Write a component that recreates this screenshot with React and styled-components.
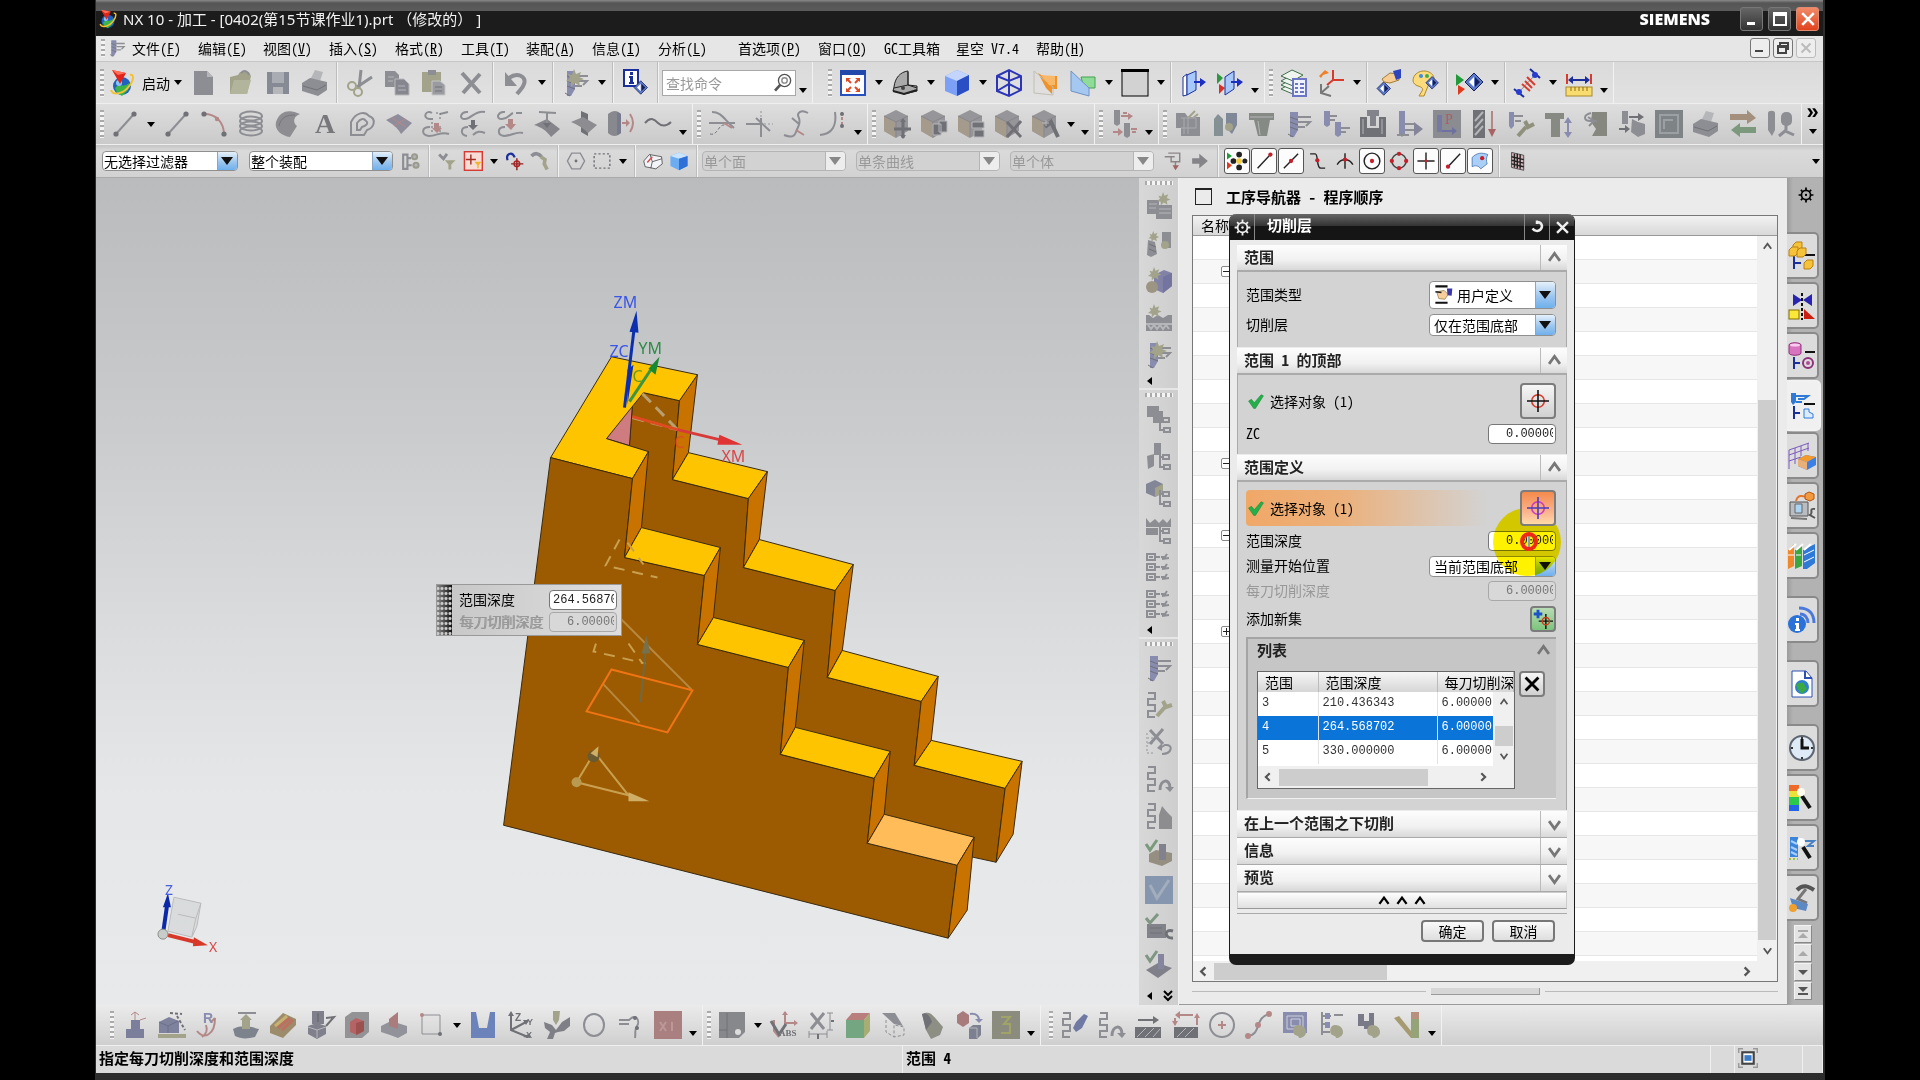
import React from 'react';
import styled, { createGlobalStyle, css } from 'styled-components';

const GlobalStyle = createGlobalStyle`
  * {
    box-sizing: border-box;
  }

  body {
    margin: 0;
    background: #000;
    color: #000;
    font-family: 'Noto Sans Mono CJK SC', 'Noto Sans CJK SC', sans-serif;
    font-size: 14px;
    line-height: 20px;
  }

  button, input, select {
    margin: 0;
    padding: 0;
    font: inherit;
    color: inherit;
  }
`;

/* ---------- icons ---------- */

const G = '#8d8e94';
const D = '#707177';
const L = '#b5b6b9';
const OL = '#a2a38a';
const RO = '#b58888';
const BL = '#888cae';
const NAVY = '#1a2f9c';

const ln = (d, c = D, w = 2, dash) => (
  <path d={d} fill="none" stroke={c} strokeWidth={w} strokeDasharray={dash} />
);
const fl = (d, c = G, s) => <path d={d} fill={c} stroke={s} />;
const dot = (x, y, r = 2, c = D, s) => <circle cx={x} cy={y} r={r} fill={c} stroke={s} />;

const star = (c = OL) => fl('M12 0l2 5 5-2-2 5 5 2-5 2 1 5-5-3-4 4v-5l-5-1 4-3-2-4 4 1z', c);
const greyCube = (
  <>
    {fl('M1 6l12-6 12 6v15l-12 7-12-7z', '#96959a')}
    {fl('M1 6l12 6v16L1 21z', '#a49b8c')}
    {ln('M1 6l12 6 12-6M13 12v15', '#85858b', 1)}
  </>
);
const cutter = (
  <>
    {fl('M5 2h8v18l-4 7H5z', BL)}
    {ln('M12 7h14M13 12h12l-4 4M13 17h7', G, 2)}
    {ln('M5 7l8 3M5 12l8 3M5 17l8 3M3 24l5 3', D, 1)}
  </>
);
const coil = ln('M3 2h7v6H3v6h7v6H3v6h7', G, 2);
const tree = ln('M18 13h6v4h-6zM19 23h6v4h-6zM15 11v15M15 15h3M15 25h4', G, 2);
const blocks = (
  <>
    {[4, 14, 24].map((y) => (
      <g key={y}>
        {ln(`M2 ${y - 3}h8v6H2zM10 ${y}h5M4 ${y}h4`, G, 2)}
        {ln(`M16 ${y}h4l2-3M17 ${y + 2}l7-1`, G, 2)}
      </g>
    ))}
  </>
);
const blueDiamond = (
  <>
    {fl('M13 5l9 9-9 9-9-9z', '#5c78c8', '#15205a')}
    {fl('M13 9v10l-5-5z', '#fff')}
    {fl('M14 9v10l5-5z', '#15205a')}
  </>
);
const palette = fl('M16 14c6 0 8 4 8 7 0 4-4 6-7 6 0-3-4-2-5-4-2-4 0-9 4-9z', OL);

const icons = {
  nx: (
    <>
      {dot(14, 17, 9, '#1f62c0')}
      {fl('M7 19c4-5 9 0 14-5l-1 7-6 6-5-3z', '#3cb44a')}
      {dot(11, 14, 3, '#8cc4f4')}
      {ln('M3 21c2 6 13 4 19-5 4-6 4-11 0-10', '#f2c230', 2)}
      {fl('M4 1l14 3-6 11z', '#e2231a')}
      {fl('M4 1l14 3-8 2z', '#ff7058')}
    </>
  ),
  file: <>{fl('M4 2h13l6 6v18H4z', G)}{fl('M17 2v6h6z', L)}</>,
  open: <>{fl('M3 8l8-2 2-3h9l2 4-4 18H3z', OL)}{fl('M7 11h17l-4 14H3z', '#b3b49c')}{ln('M14 4c4-4 7-1 8 2', G)}</>,
  save: <>{fl('M3 3h22v22H3z', '#868a94')}{fl('M8 3h12v11H8z', '#aaacb3')}{fl('M9 18h10v7H9z', L)}</>,
  print: <>{fl('M9 11l5-10 8 2-3 9z', L)}{fl('M1 14l8-5 17 4v8l-9 6-16-5z', G)}{ln('M2 17l14 4 9-5', D, 1)}</>,
  cut: <>{ln('M26 8L11 18M15 1l-2 18', G, 3)}<circle cx="6" cy="17" r="4" fill="none" stroke={OL} strokeWidth="2" /><circle cx="12" cy="23" r="4" fill="none" stroke={OL} strokeWidth="2" /></>,
  copy: <>{fl('M2 2h10l4 4v12H2z', G)}{fl('M12 10h9l5 5v11H12z', '#85868e', '#b8b8bc')}{ln('M5 8h6M5 12h5M15 17h7M15 21h8', L, 1)}</>,
  paste: <>{fl('M2 3h19v20H2z', OL)}{fl('M8 1h8v5H8z', G)}{fl('M12 12h8l5 4v10H12z', '#9a9ba1', '#c7c7c9')}{ln('M15 18h7M15 22h7', D, 1)}</>,
  del: ln('M5 4l18 20M23 5L6 24', G, 4),
  undo: <>{ln('M7 9c8-6 18-2 15 6-1 4-4 6-7 10', G, 4)}{fl('M3 3v14h12z', G)}</>,
  wizard: <>{cutter}{star()}</>,
  info: (
    <>
      <rect x="2" y="1" width="14" height="16" fill="#fff" stroke={NAVY} strokeWidth="2" />
      {fl('M8 3h3v3H8zM7 7h4v6h1v2H7v-2h1V9H7z', NAVY)}
      <g transform="translate(9 8) scale(.75)">{blueDiamond}</g>
    </>
  ),
  fit: (
    <>
      <rect x="2" y="2" width="24" height="24" fill="#fff" stroke="#2a50c0" strokeWidth="2" />
      {fl('M1 1h26v5H1z', '#2348ac')}
      {ln('M8 10l4 4M20 10l-4 4M8 22l4-4M20 22l-4-4', '#dc4a24', 2)}
      {fl('M7 9h5l-5 4zM21 9h-5l5 4zM7 23h5l-5-4zM21 23h-5l5-4z', '#dc4a24')}
    </>
  ),
  snap: <>{fl('M3 18C4 9 9 3 17 2v14l9 1v5l-13 3-11-3z', '#aaa', '#222')}{ln('M3 19l14-3 9 3M17 3v13', '#222', 1)}{ln('M2 22l11 3 13-4', '#222', 2)}{dot(12, 19, 2, '#444')}</>,
  cube: <>{fl('M2 7l12-6 12 5v15l-12 6L2 22z', '#7ba0f6')}{fl('M2 7l12-6 12 5-12 6z', '#c4d5fd')}{fl('M14 12l12-6v15l-12 6z', '#2a4fc4')}</>,
  wire: ln('M2 7l12-6 12 6v14l-12 6L2 22zM2 7l12 5 12-5M14 12v15M2 22l12-7 12 6M14 1v14', '#2c35b5', 2),
  sectA: <>{fl('M6 4l5 3h14v13h-5v5l-6-6z', '#f0922a')}{ln('M2 2l19 16v8L2 24z', '#c4beb2', 1)}{fl('M9 6l14 1v9h-6z', '#f9b868')}</>,
  sectB: <>{fl('M12 8h14v11H15z', '#8fdc98', '#45a052')}{fl('M2 2l18 17v8L2 22z', '#a5c8f0', '#6f92c4')}</>,
  square: <><rect x="1" y="1" width="26" height="26" fill="#d2d2d2" stroke="#000" />{fl('M0 0h28v3H0z', '#000')}</>,
  clip: <>{fl('M4 8l4-3v21l-4 1z', '#fff', NAVY)}{fl('M8 6l9-4v19l-9 5z', '#a7c8fa', NAVY)}{ln('M15 13h9', '#1b2fc4')}{fl('M21 9l6 4-6 5z', '#1b2fc4')}</>,
  clip2: <>{fl('M1 4l6 5-6 6z', '#2a9a3c')}{fl('M3 15l6 4-6 6z', '#dc2e22')}{fl('M9 8l9-6v18l-9 6z', '#a7c8fa', NAVY)}{ln('M15 13h9', '#1b2fc4')}{fl('M21 9l6 4-6 5z', '#1b2fc4')}</>,
  layers: <>{[20, 16, 12, 7].map((y) => <g key={y}>{fl(`M1 ${y}l11-6 11 5-10 6z`, '#f0f4ef', '#3f6e4c')}</g>)}<rect x="13" y="10" width="13" height="17" fill="#eef3ff" stroke="#6c76c4" strokeWidth="2" />{ln('M15 15h3M20 15h4M15 19h3M20 19h4M15 23h3M20 23h4', '#6c76c4')}</>,
  csys: <>{ln('M16 1v10h11M16 11l-6 5', '#d83a2c')}{ln('M4 15v9l10 3M4 24l8-7', '#777')}{fl('M2 7l6-6 4 3-6 2-2 3z', '#f08028')}</>,
  hand: <><g transform="translate(-1 9) scale(.75)">{blueDiamond}</g>{fl('M7 10l8-6 9 1v6l-9 3-6-1z', '#f7cd94', '#a07c38')}{fl('M18 2l8-2v9l-5 2z', '#2d44bb')}</>,
  palette: <>{fl('M3 6c6-7 18-4 19 3 1 5-6 4-6 8l-4 10H7l3-5c2-3-1-4-4-5C0 15 0 10 3 6z', '#fbdb7c', '#b18826')}{dot(9, 7, 2, '#3c8ce0')}{dot(15, 7, 2, '#44aa50')}<g transform="translate(11 4) scale(.7)">{blueDiamond}</g></>,
  play: <>{fl('M1 5l8 6-8 6z', '#239a39')}{fl('M3 16l7 4-7 6z', '#e03b1c')}<g transform="translate(6 -1)">{blueDiamond}</g></>,
  measure: <>{ln('M1 20l10 8M17 0l10 9', NAVY)}{ln('M6 23L22 6', '#888', 1)}{ln('M9 15l8 7M12 12l7 7M14 8l8 8', '#d83a2c')}{dot(6, 23, 3, '#2a3bd0')}{dot(22, 6, 3, '#2a3bd0')}</>,
  ruler: <>{ln('M2 5v10M26 5v10', '#d83a2c')}{ln('M5 11h18', NAVY)}{fl('M3 11l5-4v8zM25 11l-5-4v8z', NAVY)}<rect x="1" y="18" width="26" height="9" fill="#f8dc70" stroke="#a8882c" />{ln('M6 18v4M10 18v4M14 18v4M18 18v4M22 18v4', '#8a6c1c', 1)}</>,

  line: <>{ln('M5 24L23 4', G, 2)}{dot(5, 24, 2.6)}{dot(23, 4, 2.6)}</>,
  arc: <>{ln('M4 4c12 0 20 8 20 21', RO, 2)}{dot(4, 4, 2.6)}{dot(17, 9, 2.2, RO)}{dot(24, 24, 2.6)}</>,
  helix: <>{[5, 10, 15, 20].map((y) => <ellipse key={y} cx="14" cy={y + 1} rx="11" ry="4.5" fill="none" stroke={G} strokeWidth="2" />)}</>,
  surf: <>{fl('M2 12C6 0 16-1 26 4c-6 2-8 8-3 12l-7 11C8 26 0 20 2 12z', '#8d8d92')}{ln('M5 16c2-9 8-11 16-11', '#75757b', 1)}</>,
  letter: <text x="14" y="23" textAnchor="middle" fontFamily="Liberation Serif, serif" fontWeight="700" fontSize="28" fill="#77777c">A</text>,
  offset: <>{ln('M3 25V12C8 2 17 1 21 6c8 3 5 12-2 14l-3 5z', G, 2)}{ln('M9 20v-7c4-5 7-5 9-2 3 2 0 5-4 6l-2 3z', G, 2)}</>,
  patch: <>{fl('M1 10l12-6 14 9-11 11c-4-7-9-10-15-14z', '#8f8d9c')}{ln('M7 8l14 9M9 16l11-7', RO, 1)}</>,
  proj1: <>{ln('M10 3c-6-4-10 5-3 6h4M8 17c-9 0-9 8-1 9 8 0 12-5 20-2M18 4l8-2', G)}{ln('M14 3h4v7M10 12v12M18 16v8', D, 1, '2 2')}{fl('M12 13h5v5h3l-5 5-5-5h2z', RO)}</>,
  proj2: <>{ln('M9 2C2 1-1 9 6 9c6 0 10-9 20-7M9 17c-8 0-8 8-1 9M14 25c4-4 7-4 12-2', G)}{fl('M12 10h4v5h3l-5 5-5-5h3z', D)}</>,
  proj3: <>{ln('M9 2C2 1-1 9 6 9c6 0 8-5 11-6M20 3h6M9 17c-8 0-8 8-1 9 7 0 12-5 19-3', G)}{fl('M12 9h5v5h3l-5 6-6-6h3z', RO)}</>,
  sheet: <>{fl('M1 15l13-6 13 10-9 8c-4-6-10-10-17-12z', '#85858b')}{ln('M14 2v13M6 2l17 1', G)}{fl('M10 13h8l-4 5z', D)}</>,
  isect: <>{fl('M11 1l7 3v22l-7-4z', D)}{fl('M1 12l12-5 14 8-9 8C13 18 8 15 1 12z', '#8c8c91')}</>,
  wrap: <>{fl('M1 4c5-4 9-4 13 0v19c-4 4-9 4-13 0z', '#88898f')}{fl('M10 2l4 2v19l-4 2z', '#777a8c')}{ln('M15 13h7M23 4c4 6 4 12 0 18', RO)}{fl('M19 9l4 4-4 4z', RO)}</>,
  wave: ln('M1 13c6-7 10-3 13 0s8 4 13-1', D, 2),

  trim1: <>{ln('M4 2c9 0 11 6 22 16M1 13h26', G)}{ln('M16 13L24 18', RO)}{ln('M2 24c8 2 8-10 15-9', D, 1, '3 2')}</>,
  trim2: <>{ln('M1 14h16M16 8v19M11 8l14 13', G)}{ln('M16 1v7M19 14h9', L, 2, '2 2')}</>,
  trim3: <>{ln('M26 3c-7-4-12 0-9 5 2 6-1 8-3 14-2 6-7 5-12 3M10 8l7 6', G)}{ln('M14 20l8 5', RO)}</>,
  trim4: <>{ln('M1 25c12-1 17-9 15-23', G)}{ln('M23 2v14', RO, 2, '3 2')}{dot(23, 4, 2)}{dot(23, 16, 2)}</>,

  cubeMove: <>{greyCube}{ln('M20 10v18M11 19h17', D, 3)}{fl('M17 12l3-4 3 4zM17 25l3 4 3-4z', D)}</>,
  cubeCopy: <>{greyCube}{fl('M13 14h8v11h-8zM19 11h8v11h-8z', D, L)}</>,
  cubeList: <>{greyCube}{fl('M15 12h12v6H15zM17 20h10v7H17z', D, L)}</>,
  cubeDel: <>{greyCube}{ln('M13 12l14 15M27 11L13 27', D, 3)}</>,
  cubeEdit: <>{greyCube}{ln('M14 17l6-5 7 15', D, 4)}{ln('M15 10v6M11 13h7', L, 1)}</>,
  pins: <>{fl('M4 0h6v14l-3 2-3-2zM14 13h6v13l-3 2-3-2z', G)}{ln('M11 6h9M13 3h4M3 22h8M21 19h6M22 22h4', RO)}{fl('M18 3l5 3-5 4zM8 18l5 4-5 4z', RO)}</>,

  geo: <>{fl('M2 3h9l3 4h12v19H7v-8H2z', G)}{ln('M14 8l7-7M19 8l5-4', OL)}{ln('M7 8h15v10H7M10 8v16M14 8v16', '#a8a9ad', 1)}</>,
  bottle: <>{fl('M3 9l4-5 5 5v17H3z', '#849094')}{fl('M15 3h11v12l-5 9-6-6z', '#7f8896')}{dot(18, 17, 4, OL)}</>,
  funnel: <>{fl('M1 3h25v7h-4l-3 16h-9L6 10H1z', '#868a84')}{ln('M2 7h23M10 11l2 14', L, 1)}</>,
  mill: cutter,
  mill2: <>{fl('M2 1h6v14l-3 2-3-2zM13 12h6v13l-3 2-3-2z', BL)}{ln('M8 6h7M8 10h5M19 18h9M19 22h5', G)}</>,
  block: <>{fl('M1 7h7v11h12V7h7v20H1z', D)}{fl('M8 0h12v6h-3v10h-6V6H8z', '#83848b')}{ln('M4 9v15M23 9v15', L, 1)}</>,
  feed: <>{fl('M3 1h6v23l-3 3-3-3z', BL)}{ln('M9 14h9M9 20h10M1 25h12', G)}{fl('M18 12l9 7-9 7z', '#84859a')}</>,
  param: <>{fl('M0 0h28v28H0z', '#8b8c92')}{fl('M4 5h5v17H4z', '#777aa0')}<text x="12" y="14" fontSize="14" fontFamily="Liberation Serif, serif" fill="#b05c5c">P</text>{ln('M9 21h12', '#6d70a0')}{fl('M19 17l5 4-5 4z', '#6d70a0')}</>,
  drill: <>{fl('M3 0h12v28H3z', D)}{ln('M5 11l8-9M5 18l8-9M5 25l8-9', L)}{ln('M22 1v22', RO)}{fl('M18 19h8l-4 8z', '#a86464')}</>,
  toolFix: <>{fl('M2 2h5v14l-3 3-2-3z', BL)}{ln('M7 6h9M8 11h6', G)}{ln('M11 26l8-9', '#90917c', 4)}{ln('M18 11l3 6 6-3', '#90917c', 4)}</>,
  bolt: <>{fl('M1 3h19v6h-4v18H7V9H1z', '#878983')}{ln('M24 10v14', BL)}{fl('M20 13l4-6 4 6zM20 22l4 6 4-6z', BL)}</>,
  fixture: <>{fl('M11 2h15v24H11l4-7-5-7z', '#86877f')}{ln('M10 3c-8 2-8 8 0 8h6M7 7l6 4-5 5', G)}</>,
  swap: <>{fl('M4 1h6v13H4zM14 9l6 3 7 2v10l-7 3-7-5z', G)}{ln('M11 7h12M1 19h8', D)}{fl('M20 3l6 4-6 4zM7 15l5 4-5 4z', D)}</>,
  plate: <>{fl('M0 0h28v28H0z', '#7e8486')}{ln('M5 23V5h18v18zM9 19v-9h9', '#9aa0a3')}</>,
  arrows: <>{fl('M1 4h17V0l9 8-9 6v-4H1z', '#a48f7c')}{fl('M27 17H11v-4L2 20l9 7v-4h16z', '#7c997e')}</>,
  tools: <>{fl('M2 3c0-3 7-3 7 0v17l-3 6-4-6z', G)}<rect x="15" y="2" width="11" height="14" rx="5" fill={G} />{ln('M20 15v5M13 26l6-5 9 4', G, 3)}</>,

  asm: <>{ln('M3 5h6v20H3zM9 10h5M9 20h6', G, 3)}{dot(19, 8, 5, '#9a9b8c')}{dot(21, 20, 5, '#9a9b8c')}{dot(19, 8, 2, L)}{dot(21, 20, 2, L)}</>,
  filterA: <>{ln('M3 5l6 6 5-7', G, 4)}{fl('M11 13h15l-6 6v7h-4v-7z', OL)}</>,
  filterRed: <><rect x="2" y="1" width="25" height="26" fill="#f8dcd6" stroke="#d63a32" strokeWidth="2" />{ln('M11 5v14M4 12h14', '#a03020')}{fl('M16 15h10l-4 5v4h-2v-4z', '#f2b532')}</>,
  rotate: <>{ln('M5 13C2 4 11 0 15 9', NAVY, 3)}{ln('M18 10v17M10 18h17', '#902020')}<circle cx="18" cy="18" r="4" fill="none" stroke="#b02020" strokeWidth="2" /></>,
  hammer: <>{ln('M2 7c5-5 10-4 14 1', G, 5)}{ln('M15 8l6 4-1 6 4 8', OL, 5)}</>,
  hex: <>{ln('M8 3h12l6 11-6 11H8L2 14z', G)}{dot(14, 14, 2)}</>,
  dashRect: ln('M3 4h22v20H3z', D, 2, '3 3'),
  face: <>{fl('M1 14l8-9 17 3 1 10-9 7-15-3z', '#f2f4f8', '#333')}{ln('M10 5l3 10 13-4M13 15l-2 9', '#333', 1)}{ln('M6 16l7-8', '#d84848', 2)}</>,
  bluebox: <>{fl('M2 7l12-5 12 5v14l-12 6L2 21z', '#6cacf2')}{fl('M2 7l12-5 12 5-12 4z', '#cbe4fd')}{fl('M14 11l12-4v14l-12 6z', '#2e6fd8')}</>,
  filterB: <>{ln('M1 8h14M6 3h16v12H10V8M16 15v10', '#8d8585')}{fl('M12 20h9l-5 7z', '#a06464')}</>,
  arrowR: fl('M3 10h10V4l12 10-12 10v-6H3z', '#858589'),
  snapAll: <>{dot(17, 5, 4, '#222')}{dot(17, 23, 4, '#222')}{dot(9, 14, 4, '#222')}{dot(25, 14, 3.5, '#222')}{dot(17, 14, 4, '#f4cf3c')}{fl('M0 2l7 5-7 5z', '#239a39')}{fl('M0 15l7 5-7 6z', '#e03b1c')}</>,
  snapEnd: <>{ln('M5 24L23 5', '#222')}{dot(23, 5, 3, '#c4202c')}</>,
  snapMid: <>{ln('M4 24L24 4', '#222')}{dot(14, 14, 3, '#c4202c')}</>,
  snapCtl: <>{ln('M3 4h7c5 0 1 20 8 20h6', '#222')}{dot(13, 13, 3, '#c4202c')}</>,
  snapInt: <>{ln('M14 3v22M3 19c5-9 17-9 22 0', '#222')}{dot(14, 12, 3, '#c4202c')}</>,
  snapArc: <><circle cx="14" cy="14" r="11" fill="none" stroke="#222" strokeWidth="2" />{dot(14, 14, 3, '#c4202c')}</>,
  snapQuad: <><circle cx="14" cy="14" r="10" fill="none" stroke="#444" strokeWidth="2" />{dot(14, 4, 3, '#c4202c')}{dot(14, 24, 3, '#c4202c')}{dot(4, 14, 3, '#c4202c')}{dot(24, 14, 3, '#c4202c')}</>,
  snapPt: <>{ln('M14 2v24M2 14h24', '#222')}{dot(14, 14, 2, '#c4202c')}</>,
  snapCurve: <>{ln('M6 23L24 4', '#222')}{dot(7, 22, 3, '#c4202c')}</>,
  snapFace: <>{fl('M3 9c7-7 14-7 22-4-3 5-2 9-1 13l-9 7c-3-5-8-5-12-3z', '#abd0f8', '#3464a8')}{dot(17, 10, 3, '#c4202c')}</>,
  grid: <>{fl('M5 2l17 4v21L5 23z', '#d8b8bc', '#222')}{ln('M9 4v19M13 4v20M17 5v20M5 8l17 4M5 13l17 4M5 18l17 4', '#222', 2)}</>,

  extrude: <>{fl('M5 18h18v9H5zM10 9h9v9h-9z', '#7c7f9c')}{ln('M14 9V1M10 4l4-3 4 3M19 9l6-2', RO, 1)}</>,
  chamfer: <>{fl('M1 11l10-5 10 4v12H1z', '#7f829c')}{fl('M0 23h28v4H0z', OL)}{ln('M1 11l9 4 10-5M10 15v7', '#6c6f88', 1)}{ln('M12 2l12 1M19 5l8 14', D, 2, '3 2')}</>,
  anchor: <>{ln('M2 20c7 9 18 4 18-13M11 14c2 6 0 9-4 12M20 7l-4 4', RO, 2)}<text x="8" y="12" fontSize="14" fontWeight="700" fontFamily="Liberation Sans, sans-serif" fill={BL}>R</text></>,
  punch: <>{fl('M1 18c8-4 16-3 26 0l-4 8c-8 2-14 2-20-1z', '#7c838c')}{ln('M14 18V4M6 2h18', G)}{fl('M8 9h12l-6-6zM10 9h8v9h-8z', OL)}</>,
  brick: <>{fl('M1 15L14 2l13 6v6L14 27 1 22z', '#9c8c6c')}{ln('M6 15L18 5', '#c8b070', 3)}{ln('M9 17L21 7M13 19l11-10', '#bb7060', 3)}</>,
  column: <>{fl('M6 0h12v13H6zM2 15l9-3 9 3v8l-9 5-9-5z', '#7f808c')}{ln('M12 2v9M20 7l8-1-8 9', D)}{ln('M2 16l9 3 9-3M11 19v8', L, 1)}</>,
  redcube: <>{fl('M2 6l7-5h17v20l-7 6H2z', '#939396')}{fl('M7 11l6-4 8 3v10l-7 4-7-3z', '#b46464')}{fl('M13 12l8-2v10l-8 4z', '#9c5050')}</>,
  gem: <>{fl('M1 15l10-5 16 5v7l-9 5-8-3-9-3z', '#92929a')}{fl('M9 8l9-7v17l-9-3z', '#aa7c7c')}</>,
  frame: <>{ln('M5 4h18v19H5z', G, 1)}{dot(5, 4, 2, RO)}{dot(23, 23, 2, D)}</>,
  udie: fl('M2 1h5l3 16h8l3-16h5v26H2z', '#6c82ba'),
  zyx: <>{ln('M5 3v16l17 7M5 19l17-9', D)}{fl('M2 5l3-5 3 5zM17 9h6l-3 5zM17 26l7-4v5z', D)}<text x="9" y="10" fontSize="10" fontWeight="700" fontFamily="Liberation Sans, sans-serif" fill={D}>Z</text><text x="21" y="14" fontSize="9" fontWeight="700" fontFamily="Liberation Sans, sans-serif" fill={D}>Y</text><text x="20" y="27" fontSize="9" fontWeight="700" fontFamily="Liberation Sans, sans-serif" fill={D}>X</text></>,
  blade: <>{fl('M10 0h7l-1 9-3 5-3-5z', OL)}{fl('M1 11l8 3 4 5 6-8 8-5v9l-6 5-6 1-3 1-2 6H4l3-7-5-4z', '#7f7f88')}</>,
  ellipse: <ellipse cx="14" cy="14" rx="10" ry="11" fill="none" stroke={G} strokeWidth="2" />,
  pipe: <>{ln('M2 9h10c8-8 11 2 8 6s-1 6-2 12M2 13h10', G, 2)}{dot(18, 7, 2)}{dot(20, 17, 2)}</>,
  xbox: <>{fl('M0 0h28v28H0z', '#a97f80')}{ln('M6 11l6 9M12 11l-6 9M18 11v9', '#bc9898', 2)}</>,

  part: <>{fl('M1 1h26v20l-6 6H1z', '#87888c')}{ln('M9 2v25M1 19h8', D, 1)}{dot(20, 21, 3, '#ddd')}</>,
  abs: <>{ln('M15 1v11h11M4 9v11l5 6', RO)}{fl('M12 4l3-4 3 4zM24 9l4 3-4 3z', RO)}{ln('M1 10l9 15M16 13l-6 9', D, 3)}<text x="9" y="25" fontSize="9" fontWeight="700" fontFamily="Liberation Serif, serif" fill={D}>ABS</text></>,
  dim: <>{ln('M4 2l13 16M17 2L4 18', G, 3)}{ln('M23 2v17M20 2h6M20 19h6M2 23h18M2 20v7M20 20v7', G, 1)}{ln('M24 10h3M11 23v5', D, 2)}</>,
  rgb: <>{fl('M2 9l6-7h18l-6 7z', '#b87f7c')}{fl('M2 9h18v18H2z', '#74a682')}{fl('M20 9l6-7v18l-6 7z', '#a8ad74')}</>,
  ghost: <>{fl('M1 2h13l8 13-9-2z', G)}{ln('M5 9v12l8 5V14l10 2v8l-10 2', G, 1, '3 2')}</>,
  draft: <>{fl('M4 3c9-4 10 1 21 13l-3 8-9 4-5-9z', '#8d8f84')}{fl('M4 3c5-2 8 2 10 8l-6 8z', D)}</>,
  replace: <>{fl('M2 4l6-4 6 4v8l-6 4-6-4z', '#a87c7c')}{ln('M15 3c7-1 9 3 9 6', BL)}{fl('M20 8h8l-4 4z', BL)}{fl('M14 17l4-3h8v10l-4 4h-8z', '#7c8090')}{ln('M14 17h8v10', L, 1)}</>,
  num: <>{fl('M0 0h28v28H0z', '#8b8c7d')}{ln('M9 6h9l-6 7h6v9H9', '#a0a468', 2)}</>,

  pathA: <>{coil}{fl('M16 11l8-8 4 2-6 12-6 4-3-4z', '#7078a4')}</>,
  pathB: <>{coil}{ln('M15 25c0-11 10-12 10-2', G, 3)}{fl('M20 22h9l-4 5z', G)}</>,
  hatchA: <>{fl('M1 16h26v11H1z', D)}{ln('M3 26l9-9M11 26l9-9M19 26l7-8', L, 1)}{ln('M4 9h16', D, 2)}{fl('M19 5l6 4-6 4z', D)}</>,
  hatchB: <>{fl('M3 16h24v11H3z', D)}{ln('M6 26l9-9M14 26l9-9', L, 1)}{ln('M8 4h14M4 7v7M26 7v7', RO, 2)}{fl('M9 0L4 4l5 4zM1 10l3 5 3-5zM23 7l3-5 3 5z', RO)}</>,
  circ: <><circle cx="14" cy="14" r="12" fill="none" stroke={G} strokeWidth="2" />{ln('M14 10v8M10 14h8', RO)}</>,
  spline: <>{ln('M3 25c14-2 6-18 21-22', G)}{dot(3, 25, 3, RO)}{dot(13, 14, 3, RO)}{dot(24, 3, 3, RO)}</>,
  boxes: <>{fl('M1 1h24v21H1z', BL)}{ln('M5 5h16v13H5zM9 8h9v7H9z', '#d0d0d8', 1)}{palette}</>,
  boxTree: <>{ln('M3 1v23M3 5h9M3 13h8M3 21h8M15 4h9', G, 2)}{fl('M6 2h5v6H6zM6 11h5v6H6z', BL)}{palette}</>,
  binoc: <>{fl('M2 3h6v7h5V2h5v13l-5 3H8v-3H2z', '#787a88')}{palette}</>,
  rulerV: <>{fl('M1 7l5-2 12 15v7z', '#a69b70')}{fl('M18 1h8v7h-8z', '#b89080')}{fl('M18 8h8v19h-8z', '#94a478')}</>,

  opNew: <>{fl('M2 7h12v14H2zM11 12h16v14H11z', G)}{ln('M4 11h8M4 15h7M14 16h12M14 20h12', L, 1)}<g transform="translate(9 -1) scale(.75)">{star()}</g></>,
  toolNew: <>{fl('M3 10l7 2 2 12-6 3-4-2zM17 2h9v16h-9z', G)}{ln('M4 14l7 3M4 19l7 3', D, 1)}{dot(20, 15, 4, OL)}<g transform="translate(1 1) scale(.6)">{star()}</g></>,
  geoNew: <>{fl('M9 8l10-5 8 3v13l-9 7-9-4z', '#8282a6')}{fl('M18 10l9-4v13l-9 7z', '#7474a0')}{dot(7, 20, 6, '#9c9583')}<g transform="scale(.75)">{star()}</g></>,
  methNew: <>{fl('M1 11h3l4 3 5-3 5 3 5-3h4v16H1z', G)}{ln('M1 20h26M3 21l3 4 3-4 3 4 3-4 3 4 3-4 3 4', L)}<g transform="scale(.75)">{star()}</g></>,
  tOp: <>{fl('M2 1h12v5h4v12H8v-6H2z', G)}{tree}</>,
  tTool: <>{fl('M9 1h7v12H9zM2 14l7-2v12l-6 3z', G)}{tree}</>,
  tGeo: <>{fl('M1 5l9-4 8 4v9l-8 4-9-4z', '#828696')}{fl('M10 9l8-4v9l-8 4z', OL)}{tree}</>,
  tMeth: <>{fl('M1 2l4 5 5-4 4 4 4-4 4 4 4-5v9H1zM1 12h12v7H1z', G)}{tree}</>,
  blocks,
  opMill: cutter,
  pathFix: <>{coil}{ln('M12 25l8-9', OL, 4)}{ln('M18 10l3 6 6-2', OL, 4)}</>,
  pathDel: <>{ln('M2 5v20h8M2 10h6M2 15h6', L, 2, '2 2')}{ln('M5 2l13 14M18 1L5 16', G, 3)}{ln('M17 26c10 0 12-10 3-9l-5 3', G, 2)}{fl('M17 15v8l-5-3z', G)}</>,
  pathDoc: <>{coil}{fl('M14 13l3-9 5 6 5 5v12H14z', '#8d8d8f')}</>,
  verify: <>{fl('M4 15l7-4 16 3v8l-10 5-13-4z', '#948f80')}{fl('M14 5h7v16h-7z', '#82828e')}{ln('M1 5l4 6 7-10', '#7a9a7c', 3)}</>,
  post: <>{fl('M0 0h28v28H0z', '#8596ae')}{ln('M5 9l7 13L24 4', '#a2adbd', 3)}</>,
  shop: <>{fl('M2 11h19v14H2z', '#82828a')}{ln('M5 15h12M5 20h12', D, 1)}{ln('M1 5l4 5 8-9', '#7f9682', 3)}{ln('M28 18c-9-3-9 8 0 7', D, 3)}</>,
  gouge: <>{fl('M1 20l12-7 14 5-14 10z', '#80808a')}{fl('M13 4h6v15h-6z', '#8585a0')}{ln('M1 5l4 6 7-10', '#7f9682', 3)}</>,

  navAsm: <>{ln('M6 14v13M6 21h7', NAVY)}{ln('M17 13h10', '#111')}{[[7, 4], [3, 9], [11, 10], [18, 22]].map(([x, y]) => <g key={`${x}-${y}`} transform={`translate(${x - 3} ${y - 4})`}>{fl('M1 3l3-3h6v6l-3 3H1z', '#f5c23a', '#b98112')}</g>)}</>,
  navCon: <>{fl('M5 2l9 6-9 6zM24 2l-9 6 9 6z', '#2823b0')}{ln('M14 1v27', '#111', 2, '3 2')}<rect x="1" y="18" width="10" height="9" fill="#fbe63a" stroke="#806c00" />{fl('M16 17l11 10H16z', '#c92012')}</>,
  navPart: <>{ln('M6 15v12M6 21h6', NAVY)}{ln('M17 10h10', '#111')}{fl('M1 3c0-3 12-3 12 0v8c0 3-12 3-12 0z', '#d873bf', '#8f3279')}<ellipse cx="7" cy="3" rx="5" ry="1.5" fill="#f8cdef" /><circle cx="20" cy="21" r="5" fill="none" stroke="#8f3279" strokeWidth="2" />{dot(20, 21, 2, '#b04a98')}</>,
  navOp: <>{fl('M3 1h5v9l-3 3-2-3z', '#2f7ad6')}{ln('M8 4h12l-4 3h-6M8 10h6', '#2f7ad6')}{ln('M6 14v13M6 21h6', NAVY)}{ln('M16 12h11', '#111')}{fl('M16 17h5v3l4 2v4h-9z', '#dcecff', '#2f7ad6')}</>,
  navMach: <>{ln('M1 8l20-7M1 8v19M1 13l20-7M1 19l12-4M7 6v16M13 4v10M20 1v8', '#7b59c0', 1)}{fl('M10 17l8-4 10 2v8l-9 5-9-4z', '#3c80e6')}{fl('M10 17l8-4 10 2-9 5z', '#f39a2c')}{fl('M10 17l9 3v8l-9-4z', '#e8b078')}</>,
  navLathe: <>{fl('M2 10h18v14H2z', '#b9bcc1', '#555')}{fl('M7 12h7v9H7z', '#aad4f2', '#666')}{ln('M8 9c2-7 7-5 10-4', '#e6752a')}{fl('M17 2l4-2 5 2v5l-4 2-5-2z', '#f49a3e', '#b4540e')}{ln('M27 17c-7-1-1 4-5 6l5 3', '#555')}{ln('M3 26l16 1', '#777')}</>,
  navLib: <>{fl('M0 8l6-6v22l-6 3z', '#f0882a')}{fl('M7 8l7-6v22l-7 3z', '#3aa83e')}{fl('M15 8l12-6v19l-8 6h-4z', '#2f7ad6')}{ln('M1 8l7-6M8 8l7-6M16 8l7-6', '#fff')}{ln('M0 13h6M8 13h5M16 13l10-5M16 20l10-5', '#fff', 1)}</>,
  navInfo: <>{ln('M11 2c10 0 15 6 15 15M12 8c5 0 8 4 8 9', '#4a78dc', 3)}{dot(9, 18, 9, '#2a72d8')}{fl('M8 12h3v3H8zM7 17h4v6h1v2H7v-2h1v-4H7z', '#fff')}</>,
  navWeb: <>{fl('M4 1h14l6 7v19H4z', '#fff', '#2d50b4')}{ln('M17 1v7h7', '#2d50b4')}{dot(14, 17, 7, '#2f7fd0')}{fl('M8 15c4-5 5 0 7-3l4 7-5 5-3-3z', '#3aa845')}</>,
  navClock: <><circle cx="14" cy="14" r="12" fill="#dfeaf7" stroke="#5c6470" strokeWidth="2" />{ln('M14 5v9h7', '#111', 3)}{ln('M14 3v2M14 23v2M3 14h2M23 14h2', '#333')}</>,
  navColor: <>{fl('M1 1h10v7H1z', '#ee6a28')}{fl('M1 7h10v6H1z', '#e8e23a')}{fl('M1 13h10v8H1z', '#2cc84c')}{fl('M1 21h10v6H1z', '#2464e4')}{ln('M14 12l8 12', '#111', 4)}{dot(13, 8, 4, '#fffdf0')}</>,
  navWand: <>{fl('M2 3h8v20H2z', '#3a84dc')}{ln('M3 7l6 3M3 13l6 3M3 18l6 3', '#a8d0f8')}{ln('M12 7h14l-6 5h6', '#4c80c4')}{ln('M15 13l7 11', '#111', 4)}{dot(13, 8, 4, '#fff')}{ln('M1 25h9', '#a0c040', 2, '2 2')}</>,
  navUser: <>{ln('M9 6c6-6 11-4 17 0', '#555', 4)}{ln('M18 5l-8 10 9 4', '#777', 3)}{fl('M2 14l9 3 9 3-2 7-13-3z', '#5c88c4')}{dot(5, 24, 4, '#f0a030')}</>,
  userDef: <>{ln('M2 2h18M2 26h18', '#111', 3)}{fl('M4 10l11-2 6 6-5 7-9-1z', '#f6cf9c', '#8a6c3c')}{fl('M19 5h8l-1 11-6-1z', '#3b37a8')}{ln('M2 10l9 1', '#222', 2)}</>,
  target: <><circle cx="14" cy="14" r="8" fill="none" stroke="#d83a2c" strokeWidth="2" />{ln('M14 0v28M0 14h28', '#111', 2)}</>,
  targetHot: <><circle cx="14" cy="14" r="8" fill="none" stroke="#c83cc0" strokeWidth="2" />{ln('M14 0v28M0 14h28', '#4a3cb8', 2)}</>,
  addSet: <>{ln('M7 1v12M1 7h12', '#1c54c8', 4)}{ln('M18 7v21M8 17h20', '#111', 2)}<circle cx="18" cy="17" r="5" fill="none" stroke="#c83a1c" strokeWidth="2" /></>,
  check: fl('M1 14l5-3 5 6L23 3l4 2-14 22h-3z', '#22b04a', '#1b8a35'),
  gear: <><circle cx="14" cy="14" r="8" fill="none" stroke="currentColor" strokeWidth="3" />{ln('M14 1v5M14 22v5M1 14h5M22 14h5M5 5l3 3M20 20l3 3M5 23l3-3M20 8l3-3', 'currentColor', 3)}{dot(14, 14, 2, 'currentColor')}</>,
  close: ln('M5 5l18 18M23 5L5 23', 'currentColor', 4),
  reset: ln('M14 4c9 0 13 8 7 15-5 5-12 3-16-2M14 1v7', 'currentColor', 5),
  up: ln('M6 19l8-11 8 11', 'currentColor', 4),
  down: ln('M6 9l8 11 8-11', 'currentColor', 4),
  left: ln('M18 5L9 14l9 9', 'currentColor', 5),
  right: ln('M10 5l9 9-9 9', 'currentColor', 5),
  search: <><circle cx="17" cy="11" r="9" fill="none" stroke="#555" strokeWidth="2" /><circle cx="17" cy="11" r="4" fill="none" stroke="#888" strokeWidth="2" />{ln('M11 17L3 26', '#555', 4)}</>,
  monitor: <>{ln('M1 7V1h6M21 1h6v6M27 21v6h-6M7 27H1v-6', '#999', 2)}<rect x="6" y="6" width="16" height="16" fill="#fff" stroke="#444" strokeWidth="3" />{fl('M9 10h10v8H9z', '#3a7cc8')}</>,
};

const Svg = styled.svg`
  display: block;
  flex: none;
  width: ${(p) => p.$size}px;
  height: ${(p) => p.$size}px;
  overflow: visible;
`;

const Icon = ({ name, size = 28 }) => (
  <Svg $size={size} viewBox="0 0 28 28" aria-hidden="true">
    {icons[name]}
  </Svg>
);

/* ---------- window shell ---------- */

const Window = styled.div`
  display: flex;
  flex-direction: column;
  height: 100vh;
  min-height: 1080px;
  margin: 0 95px;
  border: solid #2c2c2c;
  border-width: 0 2px 7px 1px;
  background: #dcdcdc;
  overflow: hidden;
`;

const TitleBar = styled.header`
  display: flex;
  align-items: center;
  height: 36px;
  padding: 2px 4px 0 2px;
  gap: 5px;
  background: linear-gradient(#8a8a8a 0, #555 3px, #5c5c5c 11px, #1c1c1c 11px);
  color: #f2f2f2;
  font-family: 'Noto Sans', 'Noto Sans CJK SC', sans-serif;
`;

const WindowTitle = styled.h1`
  flex: 1;
  margin: 0;
  font-size: 15px;
  font-weight: 400;
  white-space: pre;
`;

const Brand = styled.span`
  margin-right: 25px;
  font-family: 'Open Sans', sans-serif;
  font-size: 16px;
  font-weight: 800;
  color: #fff;
`;

const WinButton = styled.button`
  display: flex;
  align-items: center;
  justify-content: center;
  width: 23px;
  height: 24px;
  border: 1px solid ${(p) => (p.$close ? '#e08a70' : '#777')};
  border-radius: 3px;
  background: ${(p) => (p.$close ? 'linear-gradient(#f08a68, #e0431c)' : 'linear-gradient(#666, #333)')};
  color: #fff;
`;

const MenuBar = styled.nav`
  display: flex;
  align-items: center;
  height: 26px;
  padding: 0 7px 2px 1px;
  background: #e6e6e6;
  border-bottom: 1px solid #c6c6c6;
`;

const MenuItem = styled.button`
  min-width: ${(p) => p.$width}px;
  border: 0;
  background: none;
  font-size: 14px;
  text-align: left;
  white-space: pre;
`;

const MenuIcon = styled.span`
  margin: 0 6px 0 1px;
`;

const MdiButton = styled.button`
  display: flex;
  align-items: center;
  justify-content: center;
  width: 20px;
  height: 20px;
  margin-left: 3px;
  border: 1px solid ${(p) => (p.disabled ? '#bbb' : '#777')};
  border-radius: 3px;
  background: #eee;
  color: ${(p) => (p.disabled ? '#bbb' : '#444')};
`;

const Push = styled.span`
  flex: 1;
`;

/* ---------- toolbars ---------- */

const barTones = {
  standard: 'linear-gradient(#dadada, #e2e2e2)',
  curve: 'linear-gradient(#dedede, #cacaca)',
  bottom: 'linear-gradient(#ebebeb, #cfcfcf)',
};

const ToolRow = styled.div`
  display: flex;
  flex: none;
  height: ${(p) => p.$height}px;
  background: ${(p) => barTones[p.$tone]};
  border-bottom: 1px solid #efefef;
`;

const ToolGroup = styled.div`
  display: flex;
  flex: none;
  align-items: center;
  margin-left: ${(p) => p.$indent || 0}px;
  padding-right: 3px;
  border-right: 1px solid #f2f2f2;
`;

const Grip = styled.span`
  flex: none;
  ${(p) =>
    p.$flat
      ? css`
          width: 28px;
          height: 4px;
          margin: 3px 0;
          background: repeating-linear-gradient(90deg, #aaa 0 2px, #f4f4f4 2px 5px);
        `
      : css`
          width: 4px;
          height: ${p.$short ? 18 : 28}px;
          margin: 0 2px 0 4px;
          background: repeating-linear-gradient(#aaa 0 2px, #f4f4f4 2px 5px);
        `}
`;

const ToolButton = styled.button`
  display: flex;
  flex: none;
  align-items: center;
  justify-content: center;
  width: 37px;
  height: 37px;
  border: 0;
  background: none;
`;

const CaretButton = styled.button`
  display: flex;
  flex: none;
  justify-content: center;
  width: ${(p) => (p.$low ? 13 : 15)}px;
  padding-top: ${(p) => (p.$low ? 16 : 0)}px;
  border: 0;
  background: none;

  &::before {
    content: '';
    border: solid transparent;
    border-width: 5px 4px 0;
    border-top-color: #000;
  }
`;

const Divider = styled.span`
  flex: none;
  align-self: stretch;
  width: 2px;
  margin: 0 ${(p) => p.$gap || 2}px;
  border-left: 1px solid #bdbdbd;
  border-right: 1px solid #f2f2f2;
`;

const LaunchButton = styled.button`
  display: flex;
  align-items: center;
  gap: 6px;
  width: 64px;
  padding-left: 2px;
  border: 0;
  background: none;
  white-space: nowrap;
`;

const SearchBox = styled.label`
  display: flex;
  align-items: center;
  width: 134px;
  height: 26px;
  padding: 0 3px;
  border: 1px solid #a8a8a8;
  background: #fff;
`;

const SearchInput = styled.input`
  flex: 1;
  min-width: 0;
  border: 0;
  outline: 0;
  background: none;

  &::placeholder {
    color: #999;
  }
`;

const Overflow = styled.button`
  display: flex;
  flex-direction: column;
  align-items: center;
  justify-content: space-between;
  width: 22px;
  margin-left: auto;
  padding-bottom: 10px;
  border: 0;
  background: none;
  font: 700 22px/16px 'Liberation Sans', sans-serif;
`;

const Caret = styled.i`
  border: solid transparent;
  border-width: 5px 4px 0;
  border-top-color: #000;
`;

const Tools = ({ items, gap }) =>
  items.split(' ').map((item, i) => {
    if (item === '|') return <Divider key={i} $gap={gap} />;
    if (item === 'v') return <CaretButton key={i} aria-label="more" />;
    if (item === '_') return <CaretButton key={i} $low aria-label="options" />;
    return (
      <ToolButton key={i} aria-label={item}>
        <Icon name={item} />
      </ToolButton>
    );
  });

/* ---------- selection bar ---------- */

const SelectionBar = styled.div`
  display: flex;
  flex: none;
  align-items: center;
  height: 33px;
  padding: 0 0 0 6px;
  background: linear-gradient(#c4c4c4, #dadada 6px, #d2d2d2);
  border-bottom: 1px solid #aaa;
`;

const SelectWrap = styled.span`
  position: relative;
  display: flex;
  flex: none;
  width: ${(p) => p.$width}px;
  height: ${(p) => p.$height || 20}px;
  margin-right: ${(p) => p.$gap || 0}px;

  &::after {
    content: '';
    position: absolute;
    top: 1px;
    right: 1px;
    bottom: 1px;
    width: 19px;
    border-left: 1px solid ${(p) => (p.$off ? '#b5b5b5' : '#8aa6c4')};
    border-radius: 0 3px 3px 0;
    background: ${(p) => (p.$off ? '#ededed' : 'linear-gradient(#e6f1fb, #9cc6ef 55%, #6fb0ec)')};
    pointer-events: none;
  }
`;

const Triangle = styled.i`
  position: absolute;
  z-index: 1;
  top: 50%;
  right: 5px;
  margin-top: -4px;
  border: solid transparent;
  border-width: 8px 6px 0;
  border-top-color: ${(p) => p.$color};
  pointer-events: none;
`;

const SelectBox = styled.select`
  flex: 1;
  min-width: 0;
  appearance: none;
  padding: 0 20px 0 ${(p) => p.$pad}px;
  border: 1px solid #8f8f8f;
  border-radius: 4px;
  background: #fff;
  color: #000;
  line-height: 16px;
  opacity: 1;

  &:disabled {
    background: #d2d2d2;
    border-color: #b4b4b4;
    color: #999;
  }
`;

const Lead = styled.span`
  position: absolute;
  z-index: 1;
  top: 4px;
  left: 5px;
  pointer-events: none;
`;

const Combo = ({ label, value, width, height, gap, disabled, lead, pad = 1, id }) => (
  <SelectWrap $width={width} $height={height} $gap={gap} $off={disabled}>
    {lead && <Lead><Icon name={lead} size={19} /></Lead>}
    <SelectBox id={id} aria-label={label} disabled={disabled} $pad={pad}>
      <option>{value}</option>
    </SelectBox>
    <Triangle $color={disabled ? '#888' : '#111'} />
  </SelectWrap>
);

const SmallButton = styled.button`
  display: flex;
  flex: none;
  align-items: center;
  justify-content: center;
  width: 26px;
  height: 26px;
  margin-left: ${(p) => p.$gap || 0}px;
  border: 1px solid ${(p) => (p.$on ? '#555' : 'transparent')};
  border-radius: 3px;
  background: ${(p) => (p.$on ? '#fcfcfc' : 'none')};
`;

const Small = ({ name, on, gap }) => (
  <SmallButton $on={on} $gap={gap} aria-label={name}>
    <Icon name={name} size={20} />
  </SmallButton>
);

const snaps = [
  ['snapAll', true], ['snapEnd', true], ['snapMid', true], ['snapCtl'], ['snapInt'],
  ['snapArc', true], ['snapQuad'], ['snapPt', true], ['snapCurve', true], ['snapFace', true],
];

/* ---------- work area ---------- */

const Work = styled.main`
  display: flex;
  flex: 1;
  min-height: 0;
`;

const Viewport = styled.section`
  position: relative;
  flex: 1;
  min-width: 0;
  overflow: hidden;
  background: linear-gradient(#b9bbbd, #c9cbcd 30%, #dadcde 55%, #e5e7e9 75%, #e8e9eb);
`;

const Scene = styled.svg`
  display: block;
  width: 100%;
  height: 100%;
  font-family: 'Noto Sans', sans-serif;
  font-size: 16px;
`;

const TOP = '#ffc400';
const SIDE = '#9c5b00';
const EDGE = '#c87200';

const faces = [
  ['644,393 680,401 673,480 749,499 744,568 836,591 828,678 922,702 915,766 1006,789 997,863 974,858 868,844 698,645 625,557 630,444 633,404', SIDE],
  ['680,401 698,375 689,453 673,480', EDGE],
  ['689,453 768,472 749,499 673,480', TOP],
  ['749,499 768,472 760,540 744,568', EDGE],
  ['760,540 854,565 836,591 744,568', TOP],
  ['836,591 854,565 843,651 828,678', EDGE],
  ['843,651 939,677 922,702 828,678', TOP],
  ['922,702 939,677 932,741 915,766', EDGE],
  ['932,741 1023,762 1006,789 915,766', TOP],
  ['1006,789 1023,762 1014,835 997,863', EDGE],
  ['633,404 607,439 630,446', '#cf7c80'],
  ['612,357 698,375 680,401 644,393 607,439 649,452 633,479 551,458', TOP],
  ['551,458 633,479 625,558 705,576 698,645 789,668 781,755 875,779 868,844 958,866 949,939 504,826', SIDE],
  ['633,479 649,452 642,528 625,558', EDGE],
  ['642,528 721,548 705,576 625,558', TOP],
  ['705,576 721,548 714,618 698,645', EDGE],
  ['714,618 805,641 789,668 698,645', TOP],
  ['789,668 805,641 796,728 781,755', EDGE],
  ['796,728 891,752 875,779 781,755', TOP],
  ['875,779 891,752 885,815 868,844', EDGE],
  ['885,815 975,838 958,866 868,844', '#ffbc58'],
  ['958,866 975,838 968,911 949,939', EDGE],
];

const Model = () => (
  <Scene viewBox="96 178 1044 828" preserveAspectRatio="xMidYMid slice" role="img" aria-label="model">
    <g stroke="#3a2a10" strokeLinejoin="round">
      {faces.map(([points, fill], i) => (
        <polygon key={i} points={points} fill={fill} />
      ))}
    </g>

    <g fill="none" stroke="#c8a050" strokeWidth="2">
      <path d="M633 418L678 430M643 394l35 36" stroke="#b8a070" strokeWidth="3" strokeDasharray="12 7" />
      <path d="M620 540l-14 26 52 12M628 543l16 22" strokeDasharray="11 8" />
      <path d="M602 626l-8 26 52 12M629 644l14 20" strokeDasharray="11 8" />
      <path d="M622 620l70 70M604 685l36 38" stroke="#b88840" />
      <path d="M577 783l18-30 34 43z" />
    </g>
    <circle cx="577" cy="783" r="5" fill="#b99a50" />
    <circle cx="594" cy="757" r="6" fill="#6a5a30" />
    <path d="M599 747l-8 7 7 4zM650 802l-21-9v9z" fill="#cfae68" />
    <path d="M641 703l5-50" stroke="#6c6a48" strokeWidth="2" />
    <path d="M647 636l-5 18h9z" fill="#77704a" />
    <path d="M612 670l81 21-25 42-81-21z" fill="none" stroke="#f07414" strokeWidth="2" />

    <path d="M625 408l10-82" stroke="#0a30b0" strokeWidth="3" />
    <path d="M637 311l-7 21 9 1zM628 370l6-5-6 40z" fill="#0a30b0" />
    <path d="M630 402l24-36" stroke="#3a9440" strokeWidth="3" />
    <path d="M660 357l-11 12 7 6z" fill="#168a30" />
    <path d="M633 417l45 13" stroke="#e04a20" strokeWidth="3" />
    <path d="M678 430l42 10" stroke="#d83a3a" strokeWidth="3" />
    <path d="M743 445l-23-10-2 10z" fill="#e03434" />
    <text x="614" y="308" fill="#3a55e8">ZM</text>
    <text x="610" y="357" fill="#3a55e8">ZC</text>
    <text x="639" y="354" fill="#2e8c48">YM</text>
    <text x="633" y="382" fill="#6a9c20">C</text>
    <text x="675" y="448" fill="#d85020">C</text>
    <text x="722" y="462" fill="#d84848">XM</text>

    <g stroke="#bbb" fill="rgba(200,205,205,.45)">
      <path d="M174 898l27 6-4 23-5 11-24-6z" />
      <path d="M178 915l18 4M196 919l5-15M196 919l-4 18" fill="none" />
    </g>
    <path d="M163 935l4-28" stroke="#0a28a8" strokeWidth="4" />
    <path d="M168 894l-5 14h8z" fill="#0a28a8" />
    <path d="M168 936l28 7" stroke="#d83828" strokeWidth="4" />
    <path d="M208 946l-14-8-1 9z" fill="#d83828" />
    <circle cx="163" cy="935" r="5" fill="#c8ccc8" stroke="#8a8e8a" />
    <text x="165" y="896" fontSize="14" fill="#4a60e0">Z</text>
    <text x="209" y="953" fontSize="14" fill="#d84848">X</text>
  </Scene>
);

const FloatBox = styled.div`
  position: absolute;
  top: 406px;
  left: 340px;
  display: flex;
  width: 186px;
  height: 52px;
  border: 1px solid #999;
  background: linear-gradient(90deg, #c6c6c6, #dedede);
`;

const FloatHandle = styled.span`
  width: 15px;
  background:
    radial-gradient(circle, #ccc 1px, transparent 2px) 3px 6px / 4px 5px,
    linear-gradient(90deg, #888, #111);
`;

const FloatFields = styled.div`
  display: grid;
  grid-template-columns: 1fr 68px;
  grid-auto-rows: 20px;
  row-gap: 2px;
  align-items: center;
  flex: 1;
  padding: 5px 4px 5px 7px;
  white-space: nowrap;
`;

const FieldLabel = styled.label`
  padding-bottom: 2px;
  color: ${(p) => (p.$off ? '#999' : '#000')};
  text-shadow: ${(p) => (p.$shade ? '1px 0 0 #999' : 'none')};
`;

const NumberInput = styled.input`
  width: 68px;
  height: 20px;
  padding: 0 2px 0 ${(p) => p.$pad}px;
  border: 1px solid #777;
  border-radius: 4px;
  background: #fff;
  font: 12px 'Liberation Mono', monospace;
  color: #222;

  &:disabled {
    background: #d8d8d8;
    border-color: #a8a8a8;
    color: #777;
  }
`;

/* ---------- side toolbar ---------- */

const SideBar = styled.div`
  display: flex;
  flex: none;
  flex-direction: column;
  width: 40px;
  background: linear-gradient(90deg, #d8d8d8, #cecece);
  border-right: 1px solid #f2f2f2;
`;

const SideGroup = styled.div`
  display: flex;
  flex-direction: column;
  align-items: center;
  flex: ${(p) => (p.$last ? 1 : 'none')};
  border-bottom: ${(p) => (p.$last ? 0 : 2)}px solid #e6e6e6;
`;

const SideMore = styled.button`
  display: flex;
  align-items: center;
  justify-content: space-between;
  align-self: stretch;
  height: 15px;
  margin-top: ${(p) => (p.$last ? 6 : 0)}px;
  padding: 0 4px 0 8px;
  border: 0;
  background: none;

  &::before {
    content: '';
    border: solid transparent;
    border-width: 4px 5px 4px 0;
    border-right-color: #000;
  }
`;

/* ---------- navigator ---------- */

const Navigator = styled.aside`
  position: relative;
  display: flex;
  flex: none;
  flex-direction: column;
  width: 608px;
  padding: 0 9px 0 13px;
  background: #ebebeb;
  border-bottom: 1px solid #999;
`;

const NavTitle = styled.h2`
  display: flex;
  align-items: center;
  gap: 14px;
  height: 37px;
  margin: 0;
  padding-left: 3px;
  font-size: 15px;
  font-weight: 700;
  white-space: pre;

  &::before {
    content: '';
    width: 15px;
    height: 14px;
    border: solid #222;
    border-width: 2px 1px 1px;
  }
`;

const NavList = styled.div`
  display: grid;
  grid-template: 20px 1fr 20px / 1fr 20px;
  flex: 1;
  min-height: 0;
  border: 1px solid #777;
  background: #f0f0f0;
`;

const NavHead = styled.div`
  grid-column: 1 / 3;
  padding-left: 8px;
  background: linear-gradient(#f2f2f2, #d8d8d8);
  border-bottom: 1px solid #999;
  line-height: 19px;
`;

const NavRows = styled.ul`
  min-height: 0;
  margin: 0;
  padding: 0;
  overflow: hidden;
  list-style: none;
`;

const NavRow = styled.li`
  height: 24px;
  padding: 6px 0 0 28px;
  background: #fff;
  border-bottom: 1px solid #e6e6e6;

  &:nth-child(even) {
    background: #f7f7f7;
  }
`;

const Expander = styled.button`
  display: block;
  width: 11px;
  height: 11px;
  border: 1px solid #888;
  border-radius: 2px;
  background: ${(p) => (p.$open ? '' : 'linear-gradient(#222, #222) center / 1px 7px no-repeat,')} linear-gradient(#222, #222) center / 7px 1px no-repeat, #fff;
`;

const ScrollBar = styled.div`
  display: flex;
  flex-direction: ${(p) => (p.$across ? 'row' : 'column')};
  align-items: center;
  justify-content: space-between;
  padding: ${(p) => (p.$across ? '0 4px' : '4px 0')};
  background: #f0f0f0;
  color: #555;
`;

const Thumb = styled.span`
  ${(p) =>
    p.$across
      ? css`
          height: 17px;
          width: ${p.$length};
          margin-right: auto;
          margin-left: ${p.$start || '4px'};
        `
      : css`
          width: 18px;
          height: ${p.$length};
          margin-top: auto;
          margin-bottom: 4px;
        `}
  background: #cdcdcd;
`;

const NavFoot = styled.div`
  display: flex;
  align-items: center;
  justify-content: center;
  height: 22px;
  padding-bottom: 4px;

  &::before, &::after {
    content: '';
    flex: 1;
    border-top: 1px solid #bbb;
  }
`;

const Splitter = styled.span`
  width: 109px;
  height: 7px;
  margin: 0 5px;
  background: #d6d6d6;
  border: solid #999;
  border-width: 0 1px 1px 0;
`;

const openRows = { 1: true, 9: true, 12: true, 16: false };

/* ---------- dialog ---------- */

const Dialog = styled.section`
  position: absolute;
  top: 36px;
  left: 50px;
  width: 346px;
  border: solid #1c1c1c;
  border-width: 0 1px 11px;
  border-radius: 7px;
  background: #ebebeb;
`;

const DialogTitle = styled.div`
  display: flex;
  align-items: center;
  height: 26px;
  border-radius: 6px 6px 0 0;
  background: linear-gradient(#666, #333 12px, #151515 12px);
  color: #eee;
`;

const DialogName = styled.h2`
  flex: 1;
  margin: 0;
  padding: 0 0 4px 12px;
  font-size: 15px;
  font-weight: 700;
  line-height: 20px;
  color: #fff;
`;

const TitleButton = styled.button`
  display: flex;
  align-items: center;
  justify-content: center;
  width: 25px;
  height: 26px;
  border: solid #888;
  border-width: 0 ${(p) => (p.$lead ? 1 : 0)}px 0 ${(p) => (p.$lead ? 0 : 1)}px;
  background: none;
`;

const DialogBody = styled.div`
  padding: 5px 7px 0;
`;

const SectionHead = styled.button`
  display: flex;
  align-items: stretch;
  width: 100%;
  height: ${(p) => (p.$closed ? 27 : 26)}px;
  padding: 0 0 0 7px;
  border: 0;
  border-bottom: 1px solid #aaa;
  background: linear-gradient(#fdfdfd, #f1f1f1 60%, #d8d8d8);
  font-size: 15px;
  font-weight: 700;
  line-height: 24px;
  text-align: left;
  white-space: pre;
  color: #222;
`;

const HeadArrow = styled.span`
  display: flex;
  align-items: center;
  justify-content: center;
  width: 27px;
  margin-left: auto;
  border-left: 1px solid #bbb;
  color: #777;
`;

const SectionBody = styled.div`
  display: grid;
  row-gap: 5px;
  margin-bottom: 1px;
  padding: ${(p) => p.$top}px 10px ${(p) => p.$bottom}px 8px;
  border: solid #aaa;
  border-width: 1px 1px 0;
  background: #d3d3d3;
`;

const FieldRow = styled.div`
  display: flex;
  align-items: center;
  justify-content: space-between;
  height: ${(p) => p.$height || 20}px;
  border-radius: 4px;
  background: ${(p) => (p.$hot ? 'linear-gradient(90deg, #f0a868, #ecb07a 30%, rgba(211,211,211,0) 78%)' : 'none')};
`;

const PickLabel = styled.span`
  display: flex;
  align-items: center;
  gap: 6px;
  padding-left: 2px;
  white-space: pre;
`;

const IconButton = styled.button`
  position: relative;
  z-index: ${(p) => (p.$hot ? 3 : 0)};
  display: flex;
  align-items: center;
  justify-content: center;
  width: ${(p) => p.$size}px;
  height: ${(p) => p.$size}px;
  border: 2px solid #7c7c7c;
  border-radius: 4px;
  background: ${(p) => p.$fill || 'linear-gradient(#f6f6f6, #d0d0d0)'};
`;

const ListBox = styled.div`
  height: 162px;
  border: solid #a4a4a4;
  border-width: 2px 0 1px 2px;
  border-bottom-color: #f2f2f2;
  background: #c6c6c6;
`;

const ListHead = styled.div`
  display: flex;
  align-items: center;
  justify-content: space-between;
  height: 24px;
  padding: 0 3px 2px 9px;
  font-size: 15px;
  font-weight: 700;
  color: #222;
`;

const HeadIcon = styled.span`
  color: #777;
`;

const ListMain = styled.div`
  display: flex;
  gap: 4px;
  padding: 8px 0 0 9px;
`;

const TableFrame = styled.div`
  position: relative;
  width: 258px;
  height: 118px;
  overflow: hidden;
  border: 1px solid #666;
  background: #fff;
`;

const RangeTable = styled.table`
  width: 256px;
  border-collapse: collapse;
  table-layout: fixed;
`;

const HeadCell = styled.th`
  width: ${(p) => p.$width};
  height: 20px;
  padding: 0 0 0 7px;
  overflow: hidden;
  border-right: 1px solid #bbb;
  background: linear-gradient(#f6f6f6, #d6d6d6);
  font-weight: 400;
  line-height: 18px;
  text-align: left;
  white-space: nowrap;
`;

const Cell = styled.td`
  height: 24px;
  padding: 0 0 2px 4px;
  overflow: hidden;
  border-right: 1px solid #e2e2e2;
  background: ${(p) => (p.$picked ? '#0a74d8' : '#fff')};
  color: ${(p) => (p.$picked ? '#fff' : '#333')};
  font: 12px 'Liberation Mono', monospace;
`;

const TableScroll = styled.div`
  position: absolute;
  display: grid;
  ${(p) =>
    p.$across
      ? css`
          right: 0;
          bottom: 0;
          left: 0;
          height: 22px;
          padding-right: 21px;
          background: #f0f0f0;
        `
      : css`
          top: 20px;
          right: 0;
          bottom: 22px;
          width: 21px;
        `}
`;

const Collapse = styled.button`
  display: flex;
  justify-content: center;
  gap: 2px;
  width: 100%;
  height: 17px;
  border: 1px solid #ccc;
  border-bottom-color: #999;
  background: linear-gradient(#fdfdfd, #e0e0e0);
`;

const Actions = styled.div`
  display: flex;
  justify-content: flex-end;
  gap: 8px;
  margin: 4px 0 0;
  padding: 6px 12px 12px;
  border-top: 1px solid #aaa;
`;

const ActionButton = styled.button`
  width: 63px;
  height: 22px;
  border: 2px solid #777;
  border-radius: 4px;
  background: linear-gradient(#fafafa, #dedede);
  line-height: 16px;
`;

const Halo = styled.span`
  position: absolute;
  z-index: 2;
  top: 294px;
  left: 263px;
  width: 68px;
  height: 68px;
  border-radius: 50%;
  background: #fff200;
  mix-blend-mode: multiply;
  pointer-events: none;
`;

const Pointer = styled.span`
  position: absolute;
  z-index: 4;
  top: 318px;
  left: 290px;
  width: 18px;
  height: 19px;
  border: 4px solid #f02818;
  border-radius: 50%;
  background: linear-gradient(#8c98c0, #8c98c0) center / 2px 11px no-repeat;
  pointer-events: none;
`;

const ranges = [
  ['3', '210.436343', '6.00000'],
  ['4', '264.568702', '6.00000'],
  ['5', '330.000000', '6.00000'],
];

const Head = ({ children, closed }) => (
  <SectionHead $closed={closed}>
    {children}
    <HeadArrow><Icon name={closed ? 'down' : 'up'} size={19} /></HeadArrow>
  </SectionHead>
);

const CutLevels = () => (
  <Dialog aria-label="切削层">
    <DialogTitle>
      <TitleButton $lead aria-label="settings"><Icon name="gear" size={17} /></TitleButton>
      <DialogName>切削层</DialogName>
      <TitleButton aria-label="reset"><Icon name="reset" size={14} /></TitleButton>
      <TitleButton aria-label="close"><Icon name="close" size={17} /></TitleButton>
    </DialogTitle>
    <DialogBody>
      <Head>范围</Head>
      <SectionBody $top={9} $bottom={11}>
        <FieldRow $height={28}>
          <FieldLabel htmlFor="range-type">范围类型</FieldLabel>
          <Combo id="range-type" value="用户定义" width={127} height={28} lead="userDef" pad={27} />
        </FieldRow>
        <FieldRow $height={22}>
          <FieldLabel htmlFor="cut-level">切削层</FieldLabel>
          <Combo id="cut-level" value="仅在范围底部" width={127} height={22} pad={4} />
        </FieldRow>
      </SectionBody>

      <Head>范围 1 的顶部</Head>
      <SectionBody $top={8} $bottom={10}>
        <FieldRow $height={36}>
          <PickLabel><Icon name="check" size={16} />选择对象 (1)</PickLabel>
          <IconButton $size={36} aria-label="选择对象"><Icon name="target" size={22} /></IconButton>
        </FieldRow>
        <FieldRow>
          <FieldLabel htmlFor="zc">ZC</FieldLabel>
          <NumberInput id="zc" defaultValue="0.000000" $pad={17} />
        </FieldRow>
      </SectionBody>

      <Head>范围定义</Head>
      <SectionBody $top={8} $bottom={11}>
        <FieldRow $height={36} $hot>
          <PickLabel><Icon name="check" size={16} />选择对象 (1)</PickLabel>
          <IconButton $size={36} $hot $fill="linear-gradient(#f58a4c, #fbb28c 60%, #ffd9a8)" aria-label="选择对象">
            <Icon name="targetHot" size={22} />
          </IconButton>
        </FieldRow>
        <FieldRow>
          <FieldLabel htmlFor="depth">范围深度</FieldLabel>
          <NumberInput id="depth" defaultValue="0.000000" $pad={17} />
        </FieldRow>
        <FieldRow>
          <FieldLabel htmlFor="measure">测量开始位置</FieldLabel>
          <Combo id="measure" value="当前范围底部" width={127} height={21} pad={4} />
        </FieldRow>
        <FieldRow>
          <FieldLabel htmlFor="per-cut" $off>每刀切削深度</FieldLabel>
          <NumberInput id="per-cut" defaultValue="6.000000" $pad={17} disabled />
        </FieldRow>
        <FieldRow $height={26}>
          <FieldLabel as="span">添加新集</FieldLabel>
          <IconButton $size={26} $fill="linear-gradient(#b8dcb4, #7cc47c)" aria-label="添加新集"><Icon name="addSet" size={20} /></IconButton>
        </FieldRow>
        <ListBox>
          <ListHead>列表<HeadIcon><Icon name="up" size={19} /></HeadIcon></ListHead>
          <ListMain>
            <TableFrame>
              <RangeTable>
                <thead>
                  <tr>
                    <HeadCell $width="60px">范围</HeadCell>
                    <HeadCell $width="119px">范围深度</HeadCell>
                    <HeadCell>每刀切削深</HeadCell>
                  </tr>
                </thead>
                <tbody>
                  {ranges.map((row) => (
                    <tr key={row[0]}>
                      {row.map((text, i) => (
                        <Cell key={i} $picked={row[0] === '4'}>{text}</Cell>
                      ))}
                    </tr>
                  ))}
                </tbody>
              </RangeTable>
              <TableScroll>
                <ScrollBar>
                  <Icon name="up" size={12} />
                  <Thumb $length="20px" />
                  <Icon name="down" size={12} />
                </ScrollBar>
              </TableScroll>
              <TableScroll $across>
                <ScrollBar $across>
                  <Icon name="left" size={12} />
                  <Thumb $across $length="149px" $start="5px" />
                  <Icon name="right" size={12} />
                </ScrollBar>
              </TableScroll>
            </TableFrame>
            <IconButton $size={26} aria-label="删除"><Icon name="close" size={20} /></IconButton>
          </ListMain>
        </ListBox>
      </SectionBody>

      <Head closed>在上一个范围之下切削</Head>
      <Head closed>信息</Head>
      <Head closed>预览</Head>
      <Collapse aria-label="collapse">
        <Icon name="up" size={16} />
        <Icon name="up" size={16} />
        <Icon name="up" size={16} />
      </Collapse>
      <Actions>
        <ActionButton>确定</ActionButton>
        <ActionButton>取消</ActionButton>
      </Actions>
    </DialogBody>
    <Halo />
    <Pointer />
  </Dialog>
);

/* ---------- resource tabs ---------- */

const TabStrip = styled.nav`
  display: flex;
  flex: none;
  flex-direction: column;
  align-items: flex-start;
  width: 36px;
  background: linear-gradient(90deg, #9c9c9c, #b2b2b2 6px);
`;

const GearButton = styled.button`
  width: 100%;
  height: 54px;
  padding: 9px 0 29px 11px;
  border: 0;
  background: none;
`;

const Tab = styled.button`
  display: flex;
  flex: none;
  align-items: center;
  width: ${(p) => (p.$active ? 34 : 32)}px;
  height: ${(p) => (p.$active ? 51 : 47)}px;
  margin-bottom: ${(p) => p.$gap}px;
  padding-left: 1px;
  border: 2px solid ${(p) => (p.$active ? '#f2f2f2' : '#8a8a8a')};
  border-left: 0;
  border-radius: 0 5px 5px 0;
  background: ${(p) => (p.$active ? '#f0f0f0' : '#dcdcdc')};
`;

const TabScroll = styled.button`
  display: flex;
  flex-direction: column;
  align-items: center;
  justify-content: center;
  gap: 1px;
  width: 18px;
  height: 18px;
  margin: 0 0 1px 7px;
  border: 1px solid #999;
  border-color: #f4f4f4 #888 #888 #f4f4f4;
  background: #e4e4e4;

  &::${(p) => (p.$up ? 'after' : 'before')} {
    content: '';
    border: solid transparent;
    border-width: ${(p) => (p.$up ? '0 5px 5px' : '5px 5px 0')};
    border-color: ${(p) => (p.$up ? 'transparent transparent #aaa' : '#555 transparent transparent')};
  }

  &::${(p) => (p.$up ? 'before' : 'after')} {
    content: ${(p) => (p.$end ? "''" : 'none')};
    width: 10px;
    height: 2px;
    background: ${(p) => (p.$up ? '#aaa' : '#555')};
  }
`;

const tabs = [
  ['navAsm', 3], ['navCon', 3], ['navPart', 1], ['navOp', 1], ['navMach', 3], ['navLathe', 3], ['navLib', 17],
  ['navInfo', 17], ['navWeb', 17], ['navClock', 3], ['navColor', 3], ['navWand', 3], ['navUser', 4],
];

/* ---------- status bar ---------- */

const StatusBar = styled.footer`
  display: grid;
  grid-template-columns: 807px 1fr 24px 68px 20px;
  flex: none;
  height: 27px;
  background: #dadada;
`;

const StatusCell = styled.span`
  display: flex;
  align-items: center;
  padding: 0 0 3px 3px;
  border-right: 1px solid #f0f0f0;
  font-size: 15px;
  font-weight: 700;
  white-space: pre;
`;

const menus = [
  ['文件', 'F', 66], ['编辑', 'E', 65], ['视图', 'V', 66], ['插入', 'S', 66], ['格式', 'R', 66],
  ['工具', 'T', 65], ['装配', 'A', 66], ['信息', 'I', 66], ['分析', 'L', 80], ['首选项', 'P', 80],
  ['窗口', 'O', 66], ['GC工具箱', '', 72], ['星空 V7.4', '', 80], ['帮助', 'H', 66],
];

export default function App() {
  return (
    <>
      <GlobalStyle />
      <Window>
        <TitleBar>
          <Icon name="nx" size={20} />
          <WindowTitle>NX 10 - 加工 - [0402(第15节课作业1).prt （修改的） ]</WindowTitle>
          <Brand>SIEMENS</Brand>
          <WinButton aria-label="minimize">
            <Svg $size={16} viewBox="0 0 16 16"><path d="M3 11h8v3H3z" fill="#fff" /></Svg>
          </WinButton>
          <WinButton aria-label="maximize">
            <Svg $size={16} viewBox="0 0 16 16"><path d="M2 2h12v12H2z" fill="none" stroke="#fff" strokeWidth="2" /><path d="M1 1h14v4H1z" fill="#fff" /></Svg>
          </WinButton>
          <WinButton $close aria-label="close"><Icon name="close" size={18} /></WinButton>
        </TitleBar>

        <MenuBar>
          <Grip $short />
          <MenuIcon><Icon name="mill" size={18} /></MenuIcon>
          {menus.map(([text, key, width]) => (
            <MenuItem key={text} $width={width}>
              {text}
              {key && <>(<u>{key}</u>)</>}
            </MenuItem>
          ))}
          <Push />
          <MdiButton aria-label="minimize document">
            <Svg $size={12} viewBox="0 0 12 12"><path d="M1 8h8v2H1z" fill="currentColor" /></Svg>
          </MdiButton>
          <MdiButton aria-label="restore document">
            <Svg $size={12} viewBox="0 0 12 12"><path d="M3 3V1h8v6H9M1 4h8v7H1zM1 5h8" fill="none" stroke="currentColor" strokeWidth="2" /></Svg>
          </MdiButton>
          <MdiButton disabled aria-label="close document"><Icon name="close" size={14} /></MdiButton>
        </MenuBar>

        <ToolRow $height={42} $tone="standard">
          <ToolGroup>
            <Grip />
            <LaunchButton><Icon name="nx" />启动</LaunchButton>
            <Tools gap={3} items="v file open save print | cut copy paste del | undo v | wizard v | info |" />
            <SearchBox>
              <SearchInput placeholder="查找命令" aria-label="查找命令" />
              <Icon name="search" size={19} />
            </SearchBox>
            <CaretButton $low aria-label="options" />
          </ToolGroup>
          <ToolGroup $indent={11}>
            <Grip />
            <Tools items="fit v snap v cube v wire sectA sectB v square v | clip clip2 _" />
          </ToolGroup>
          <ToolGroup>
            <Grip />
            <Tools items="layers csys v | hand palette | play v | measure v ruler _" />
          </ToolGroup>
        </ToolRow>

        <ToolRow $height={41} $tone="curve">
          <ToolGroup>
            <Grip />
            <Tools items="line v line arc helix surf letter offset patch proj1 proj2 proj3 sheet isect wrap wave _" />
          </ToolGroup>
          <ToolGroup>
            <Grip />
            <Tools items="trim1 trim2 trim3 trim4 _" />
          </ToolGroup>
          <ToolGroup>
            <Grip />
            <Tools items="cubeMove cubeCopy cubeList cubeDel cubeEdit v _" />
          </ToolGroup>
          <ToolGroup>
            <Grip />
            <Tools items="pins _" />
          </ToolGroup>
          <ToolGroup>
            <Grip />
            <Tools items="geo bottle funnel mill mill2 block feed param drill toolFix bolt fixture swap plate print arrows tools" />
          </ToolGroup>
          <Overflow aria-label="more tools">»<Caret /></Overflow>
        </ToolRow>

        <SelectionBar>
          <Combo label="过滤器" value="无选择过滤器" width={136} gap={11} />
          <Combo label="范围" value="整个装配" width={144} gap={5} />
          <Small name="asm" />
          <Divider $gap={4} />
          <Small name="filterA" />
          <Small name="filterRed" />
          <CaretButton aria-label="more" />
          <Small name="rotate" />
          <Small name="hammer" />
          <Divider $gap={4} />
          <Small name="hex" />
          <Small name="dashRect" />
          <CaretButton aria-label="more" />
          <Divider $gap={4} />
          <Small name="face" />
          <Small name="bluebox" />
          <Divider $gap={4} />
          <Combo label="面规则" value="单个面" width={144} gap={10} disabled />
          <Combo label="曲线规则" value="单条曲线" width={144} gap={10} disabled />
          <Combo label="体规则" value="单个体" width={144} gap={7} disabled />
          <Small name="filterB" />
          <Small name="arrowR" />
          <Divider $gap={4} />
          {snaps.map(([name, on]) => (
            <Small key={name} name={name} on={on} gap={1} />
          ))}
          <Divider $gap={5} />
          <Small name="grid" />
          <Push />
          <CaretButton aria-label="options" />
        </SelectionBar>

        <Work>
          <Viewport>
            <Model />
            <FloatBox>
              <FloatHandle />
              <FloatFields>
                <FieldLabel htmlFor="float-depth">范围深度</FieldLabel>
                <NumberInput id="float-depth" defaultValue="264.568702" $pad={3} />
                <FieldLabel htmlFor="float-cut" $off $shade>每刀切削深度</FieldLabel>
                <NumberInput id="float-cut" defaultValue="6.000000" $pad={17} disabled />
              </FloatFields>
            </FloatBox>
          </Viewport>

          <SideBar>
            <SideGroup>
              <Grip $flat />
              <Tools items="opNew toolNew geoNew methNew wizard" />
              <SideMore aria-label="more" />
            </SideGroup>
            <SideGroup>
              <Grip $flat />
              <Tools items="tOp tTool tGeo tMeth blocks blocks" />
              <SideMore aria-label="more" />
            </SideGroup>
            <SideGroup $last>
              <Grip $flat />
              <Tools items="opMill pathFix pathDel pathB pathDoc verify post shop gouge" />
              <SideMore $last aria-label="more">
                <Svg $size={12} viewBox="0 0 12 12"><path d="M2 1l4 4 4-4M2 6l4 4 4-4" fill="none" stroke="#000" strokeWidth="2" /></Svg>
              </SideMore>
            </SideGroup>
          </SideBar>

          <Navigator>
            <NavTitle>工序导航器 - 程序顺序</NavTitle>
            <NavList>
              <NavHead>名称</NavHead>
              <NavRows>
                {Array.from({ length: 31 }, (_, i) => (
                  <NavRow key={i}>
                    {i in openRows && <Expander $open={openRows[i]} aria-label="toggle" />}
                  </NavRow>
                ))}
              </NavRows>
              <ScrollBar>
                <Icon name="up" size={13} />
                <Thumb $length="540px" />
                <Icon name="down" size={13} />
              </ScrollBar>
              <ScrollBar $across>
                <Icon name="left" size={13} />
                <Thumb $across $length="173px" />
                <Icon name="right" size={13} />
              </ScrollBar>
            </NavList>
            <NavFoot><Splitter /></NavFoot>
            <CutLevels />
          </Navigator>

          <TabStrip>
            <GearButton aria-label="settings"><Icon name="gear" size={16} /></GearButton>
            {tabs.map(([name, gap]) => (
              <Tab key={name} $gap={gap} $active={name === 'navOp'} aria-label={name}>
                <Icon name={name} />
              </Tab>
            ))}
            <TabScroll $up $end aria-label="first" />
            <TabScroll $up aria-label="previous" />
            <TabScroll aria-label="next" />
            <TabScroll $end aria-label="last" />
          </TabStrip>
        </Work>

        <ToolRow $height={41} $tone="bottom">
          <ToolGroup $indent={10}>
            <Grip />
            <Tools items="extrude chamfer anchor punch brick column redcube gem frame v udie zyx blade ellipse pipe xbox _" />
          </ToolGroup>
          <ToolGroup>
            <Grip />
            <Tools items="part v abs dim rgb ghost draft replace num _" />
          </ToolGroup>
          <ToolGroup $indent={4}>
            <Grip />
            <Tools items="pathA pathB hatchA hatchB circ spline boxes boxTree binoc rulerV _" />
          </ToolGroup>
        </ToolRow>

        <StatusBar>
          <StatusCell>指定每刀切削深度和范围深度</StatusCell>
          <StatusCell>范围 4</StatusCell>
          <StatusCell />
          <StatusCell><Icon name="monitor" size={20} /></StatusCell>
          <StatusCell />
        </StatusBar>
      </Window>
    </>
  );
}
